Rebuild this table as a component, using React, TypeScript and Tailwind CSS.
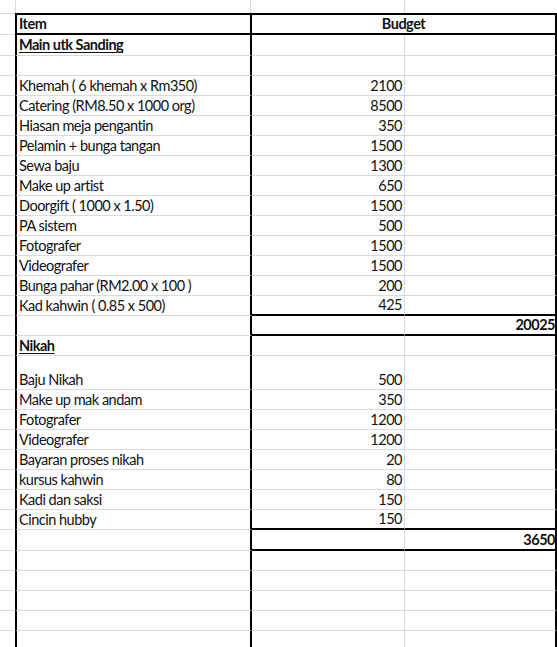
import React from 'react';

type Row = {
  h: 20 | 21 | 34;
  b?: string;
  c?: string;
  d?: string;
  section?: boolean;
  total?: boolean;
  thickBottom?: boolean;
};

const heights: Record<number, string> = {
  20: 'h-[20px]',
  21: 'h-[21px]',
  34: 'h-[34px]',
};

const rows: Row[] = [
  { h: 21, b: 'Main utk Sanding', section: true },
  { h: 20 },
  { h: 20, b: 'Khemah ( 6 khemah x Rm350)', c: '2100' },
  { h: 20, b: 'Catering (RM8.50 x 1000 org)', c: '8500' },
  { h: 20, b: 'Hiasan meja pengantin', c: '350' },
  { h: 20, b: 'Pelamin + bunga tangan', c: '1500' },
  { h: 20, b: 'Sewa baju', c: '1300' },
  { h: 20, b: 'Make up artist', c: '650' },
  { h: 20, b: 'Doorgift ( 1000 x 1.50)', c: '1500' },
  { h: 20, b: 'PA sistem', c: '500' },
  { h: 20, b: 'Fotografer', c: '1500' },
  { h: 20, b: 'Videografer', c: '1500' },
  { h: 20, b: 'Bunga pahar (RM2.00 x 100 )', c: '200' },
  { h: 20, b: 'Kad kahwin ( 0.85 x 500)', c: '425', thickBottom: true },
  { h: 20, d: '20025', total: true, thickBottom: true },
  { h: 20, b: 'Nikah', section: true },
  { h: 34, b: 'Baju Nikah', c: '500' },
  { h: 20, b: 'Make up mak andam', c: '350' },
  { h: 20, b: 'Fotografer', c: '1200' },
  { h: 20, b: 'Videografer', c: '1200' },
  { h: 20, b: 'Bayaran proses nikah', c: '20' },
  { h: 20, b: 'kursus kahwin', c: '80' },
  { h: 20, b: 'Kadi dan saksi', c: '150' },
  { h: 20, b: 'Cincin hubby', c: '150', thickBottom: true },
  { h: 21, d: '3650', total: true, thickBottom: true },
  { h: 20 },
  { h: 20 },
  { h: 20 },
  { h: 20 },
  { h: 20 },
];

function SheetRow({ row }: { row: Row }) {
  const h = heights[row.h];
  const align = row.h === 34 ? 'items-end' : 'items-center';
  const edge = row.thickBottom ? 'border-b-2 border-b-black' : 'border-b border-b-[#d5dbe4]';

  return (
    <div className={`flex ${h}`}>
      <div className="w-[15px] shrink-0 border-b border-[#d5dbe4]" />
      <div className={`flex ${align} w-[237px] shrink-0 border-x-2 border-x-black border-b border-b-[#d5dbe4] pl-[2px]`}>
        {row.b && (
          <span className={row.section ? 'font-bold underline underline-offset-2' : ''}>{row.b}</span>
        )}
      </div>
      <div className={`flex ${align} justify-end w-[153px] shrink-0 border-r border-r-[#d5dbe4] ${edge} pr-[2px]`}>
        {row.c}
      </div>
      <div className={`flex ${align} justify-end w-[152px] shrink-0 border-r-2 border-r-black ${edge}`}>
        {row.d && <span className="font-bold">{row.d}</span>}
      </div>
    </div>
  );
}

export default function App() {
  return (
    <div className="h-[647px] w-[557px] overflow-hidden bg-white text-[14.5px] leading-[18px] tracking-[-0.5px] text-[#111] font-['Lato','Liberation_Sans',sans-serif]">
      {/* strip of empty cells above the table */}
      <div className="flex h-[13px]">
        <div className="w-[16px] shrink-0 border-r border-[#d5dbe4]" />
        <div className="w-[235px] shrink-0 border-r border-[#d5dbe4]" />
        <div className="w-[154px] shrink-0 border-r border-[#d5dbe4]" />
        <div className="w-[152px] shrink-0" />
      </div>

      {/* header */}
      <div className="flex h-[22px]">
        <div className="w-[15px] shrink-0 border-t border-b border-[#d5dbe4]" />
        <div className="flex items-center w-[237px] shrink-0 border-2 border-black pl-[2px] font-bold">Item</div>
        <div className="flex items-center justify-center w-[305px] shrink-0 border-y-2 border-r-2 border-black font-bold">
          Budget
        </div>
      </div>

      {rows.map((row, i) => (
        <SheetRow key={i} row={row} />
      ))}
    </div>
  );
}
